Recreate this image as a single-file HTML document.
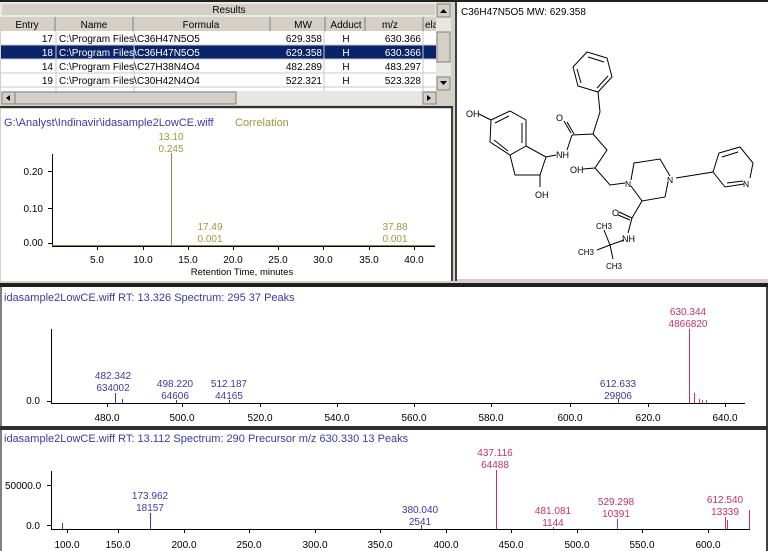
<!DOCTYPE html>
<html><head><meta charset="utf-8"><style>
html,body{margin:0;padding:0;background:#d4d0c8;width:768px;height:551px;overflow:hidden}
svg{display:block;font-family:"Liberation Sans",Arial,sans-serif}
</style></head><body>
<svg width="768" height="551" viewBox="0 0 768 551" xmlns="http://www.w3.org/2000/svg">
<rect x="0" y="0" width="768" height="2" fill="#202020"/>
<rect x="0" y="2" width="453" height="105" fill="#d4d0c8"/>
<rect x="1" y="3" width="435" height="13" fill="#d4d0c8" stroke="#ffffff" stroke-width="1"/>
<text x="229" y="13" font-size="10" text-anchor="middle" fill="#000">Results</text>
<g font-size="10" fill="#000">
<rect x="1" y="17" width="435" height="14" fill="#d4d0c8"/>
<g stroke="#808080"><line x1="55" y1="17" x2="55" y2="31"/><line x1="133" y1="17" x2="133" y2="31"/><line x1="270" y1="17" x2="270" y2="31"/><line x1="325" y1="17" x2="325" y2="31"/><line x1="365" y1="17" x2="365" y2="31"/><line x1="423" y1="17" x2="423" y2="31"/></g>
<text x="27" y="28" text-anchor="middle">Entry</text><text x="94" y="28" text-anchor="middle">Name</text><text x="201" y="28" text-anchor="middle">Formula</text><text x="303" y="28" text-anchor="middle">MW</text><text x="346" y="28" text-anchor="middle">Adduct</text><text x="390" y="28" text-anchor="middle">m/z</text><text x="425" y="28">ela</text>
<rect x="1" y="31" width="435" height="60" fill="#fff"/>
<rect x="1" y="45" width="435" height="14" fill="#0a246a"/>
<g stroke="#c8c8c8"><line x1="1" y1="45" x2="436" y2="45"/><line x1="1" y1="59" x2="436" y2="59"/><line x1="1" y1="73" x2="436" y2="73"/><line x1="1" y1="87" x2="436" y2="87"/>
<line x1="56" y1="31" x2="56" y2="91"/><line x1="134" y1="31" x2="134" y2="91"/><line x1="324" y1="31" x2="324" y2="91"/><line x1="423" y1="31" x2="423" y2="91"/></g>
<g><text x="53" y="42" text-anchor="end">17</text><text x="59" y="42">C:\Program Files\</text><text x="137" y="42">C36H47N5O5</text><text x="322" y="42" text-anchor="end">629.358</text><text x="346" y="42" text-anchor="middle">H</text><text x="421" y="42" text-anchor="end">630.366</text></g>
<g fill="#fff"><text x="53" y="56" text-anchor="end">18</text><text x="59" y="56">C:\Program Files\</text><text x="137" y="56">C36H47N5O5</text><text x="322" y="56" text-anchor="end">629.358</text><text x="346" y="56" text-anchor="middle">H</text><text x="421" y="56" text-anchor="end">630.366</text></g>
<g><text x="53" y="70" text-anchor="end">14</text><text x="59" y="70">C:\Program Files\</text><text x="137" y="70">C27H38N4O4</text><text x="322" y="70" text-anchor="end">482.289</text><text x="346" y="70" text-anchor="middle">H</text><text x="421" y="70" text-anchor="end">483.297</text></g>
<g><text x="53" y="84" text-anchor="end">19</text><text x="59" y="84">C:\Program Files\</text><text x="137" y="84">C30H42N4O4</text><text x="322" y="84" text-anchor="end">522.321</text><text x="346" y="84" text-anchor="middle">H</text><text x="421" y="84" text-anchor="end">523.328</text></g>
</g>
<rect x="436" y="3" width="15" height="88" fill="#e8e6e0"/>
<rect x="437" y="4" width="13" height="13" fill="#d4d0c8" stroke="#808080"/><path d="M440 13 L443.5 9 L447 13Z" fill="#000"/>
<rect x="437" y="32" width="13" height="30" fill="#d4d0c8" stroke="#808080"/>
<rect x="437" y="77" width="13" height="13" fill="#d4d0c8" stroke="#808080"/><path d="M440 81 L443.5 85 L447 81Z" fill="#000"/>
<rect x="1" y="91" width="435" height="14" fill="#e8e6e0"/>
<rect x="2" y="92" width="13" height="12" fill="#d4d0c8" stroke="#808080"/><path d="M10 95 L6 98 L10 101Z" fill="#000"/>
<rect x="15" y="92" width="221" height="12" fill="#d4d0c8" stroke="#808080"/>
<rect x="423" y="92" width="13" height="12" fill="#d4d0c8" stroke="#808080"/><path d="M427 95 L431 98 L427 101Z" fill="#000"/>
<rect x="0" y="106" width="453" height="2" fill="#303030"/>
<rect x="1" y="109" width="450" height="172" fill="#fff"/>
<rect x="451" y="108" width="2" height="174" fill="#404040"/>
<text x="4" y="126" font-size="11" fill="#3a3aa8">G:\Analyst\Indinavir\idasample2LowCE.wiff</text>
<text x="235" y="126" font-size="11" fill="#9a9a40">Correlation</text>
<g stroke="#000" stroke-width="1"><line x1="52.5" y1="154" x2="52.5" y2="246"/><line x1="52" y1="246.5" x2="435" y2="246.5"/>
<line x1="48" y1="171.5" x2="52" y2="171.5"/><line x1="48" y1="208.5" x2="52" y2="208.5"/><line x1="48" y1="243.5" x2="52" y2="243.5"/>
<line x1="97.5" y1="246" x2="97.5" y2="250"/><line x1="143.5" y1="246" x2="143.5" y2="250"/><line x1="188.5" y1="246" x2="188.5" y2="250"/><line x1="233.5" y1="246" x2="233.5" y2="250"/><line x1="278.5" y1="246" x2="278.5" y2="250"/><line x1="323.5" y1="246" x2="323.5" y2="250"/><line x1="369.5" y1="246" x2="369.5" y2="250"/><line x1="414.5" y1="246" x2="414.5" y2="250"/></g>
<line x1="52" y1="245.5" x2="435" y2="245.5" stroke="#8a8a40"/>
<line x1="171.5" y1="153" x2="171.5" y2="246" stroke="#8a8a40"/>
<g font-size="10" fill="#000"><text x="43" y="175" text-anchor="end">0.20</text><text x="43" y="212" text-anchor="end">0.10</text><text x="43" y="246" text-anchor="end">0.00</text>
<g text-anchor="middle"><text x="97" y="263">5.0</text><text x="143" y="263">10.0</text><text x="188" y="263">15.0</text><text x="233" y="263">20.0</text><text x="278" y="263">25.0</text><text x="323" y="263">30.0</text><text x="369" y="263">35.0</text><text x="414" y="263">40.0</text><text x="242" y="275" font-size="9.5">Retention Time, minutes</text></g></g>
<g font-size="10" fill="#9a9a40" text-anchor="middle"><text x="171" y="140">13.10</text><text x="171" y="152">0.245</text><text x="210" y="230">17.49</text><text x="210" y="242">0.001</text><text x="395" y="230">37.88</text><text x="395" y="242">0.001</text></g>
<rect x="455" y="2" width="2" height="279" fill="#404040"/>
<rect x="457" y="2" width="311" height="277" fill="#fff"/>
<text x="461" y="15" font-size="10" fill="#000">C36H47N5O5   MW: 629.358</text>
<g stroke="#000" stroke-width="1" fill="none">
<path d="M587 52 L607 58 L612 77 L598 92 L578 86 L573 67 Z M588 57 L604 62 M608 76 L597 88 M577 69 L581 83"/>
<path d="M598 92 L600 112 L593 134 L572 135 M593 134 L607 150 L595 168 L610 185 L625 183"/>
<path d="M571 133 L564 121 M574 134 L567 122 M572 135 L567 150"/>
<path d="M595 168 L583 169"/>
<path d="M631 180 L634 163 L660 159 L670 176 M668 182 L665 197 L642 201 L631 186"/>
<path d="M676 178 L713 172 L719 153 L740 147 L753 163 L750 178 M744 184 L725 187 L713 172 M722 157 L738 152 M727 183 L743 181"/>
<path d="M642 201 L632 218 L628 233 M632 218 L619 212 M630 220 L618 215 M624 240 L610 245 L604 230 M610 245 L597 250 M610 245 L613 259"/>
<path d="M491 120 L510 111 L526 120 L526 146 L510 155 L490 142 Z M495 123 L509 116 M522 123 L522 143 M508 151 L494 140"/>
<path d="M491 120 L479 114 M526 146 L546 157 L540 175 L515 175 L510 155 M546 157 L556 155 M540 175 L540 187"/>
</g>
<g font-size="9" fill="#000"><text x="466" y="117">OH</text><text x="556" y="121">O</text><text x="556" y="158">NH</text><text x="570" y="173">OH</text><text x="625" y="187" font-size="8.5">N</text><text x="667" y="183" font-size="8.5">N</text><text x="743" y="187" font-size="8.5">N</text><text x="535" y="198">OH</text><text x="612" y="216">O</text><text x="622" y="242">NH</text><text x="596" y="229" font-size="8">CH3</text><text x="578" y="255" font-size="8">CH3</text><text x="606" y="269" font-size="8">CH3</text></g>
<rect x="0" y="281" width="768" height="2" fill="#d4d0c8"/>
<rect x="0" y="283" width="768" height="4" fill="#202020"/>
<rect x="0" y="287" width="766" height="139" fill="#fff"/>
<rect x="766" y="287" width="2" height="139" fill="#404040"/>
<rect x="0" y="287" width="2" height="139" fill="#808080"/>
<text x="4" y="301" font-size="11" fill="#3a3aa8">idasample2LowCE.wiff RT: 13.326 Spectrum: 295  37 Peaks</text>
<g stroke="#000"><line x1="51.5" y1="329" x2="51.5" y2="403"/><line x1="51" y1="403.5" x2="745" y2="403.5"/><line x1="47" y1="401.5" x2="51" y2="401.5"/>
<g><line x1="107.5" y1="403" x2="107.5" y2="407"/><line x1="182.5" y1="403" x2="182.5" y2="407"/><line x1="260.5" y1="403" x2="260.5" y2="407"/><line x1="337.5" y1="403" x2="337.5" y2="407"/><line x1="414.5" y1="403" x2="414.5" y2="407"/><line x1="491.5" y1="403" x2="491.5" y2="407"/><line x1="570.5" y1="403" x2="570.5" y2="407"/><line x1="648.5" y1="403" x2="648.5" y2="407"/><line x1="725.5" y1="403" x2="725.5" y2="407"/></g></g>
<g stroke="#3a3aa8"><line x1="115.5" y1="393" x2="115.5" y2="403"/><line x1="122.5" y1="399" x2="122.5" y2="403"/><line x1="176.5" y1="400" x2="176.5" y2="403"/><line x1="229.5" y1="400" x2="229.5" y2="403"/><line x1="618.5" y1="399" x2="618.5" y2="403"/></g>
<g stroke="#c8306a"><line x1="689.5" y1="329" x2="689.5" y2="403"/><line x1="694.5" y1="393" x2="694.5" y2="403"/><line x1="699.5" y1="399" x2="699.5" y2="403"/><line x1="702.5" y1="400" x2="702.5" y2="403"/><line x1="706.5" y1="400" x2="706.5" y2="403"/></g>
<g font-size="10" fill="#000"><text x="40" y="404" text-anchor="end">0.0</text>
<g text-anchor="middle"><text x="107" y="421">480.0</text><text x="182" y="421">500.0</text><text x="260" y="421">520.0</text><text x="337" y="421">540.0</text><text x="414" y="421">560.0</text><text x="491" y="421">580.0</text><text x="570" y="421">600.0</text><text x="648" y="421">620.0</text><text x="725" y="421">640.0</text></g></g>
<g font-size="10" fill="#3a3aa8" text-anchor="middle"><text x="113" y="379">482.342</text><text x="113" y="391">634002</text><text x="175" y="387">498.220</text><text x="175" y="399">64606</text><text x="229" y="387">512.187</text><text x="229" y="399">44165</text><text x="618" y="387">612.633</text><text x="618" y="399">29806</text></g>
<g font-size="10" fill="#c8306a" text-anchor="middle"><text x="688" y="315">630.344</text><text x="688" y="327">4866820</text></g>
<rect x="0" y="426" width="768" height="4" fill="#303030"/>
<rect x="0" y="430" width="766" height="121" fill="#fff"/>
<rect x="766" y="430" width="2" height="121" fill="#404040"/>
<rect x="0" y="430" width="2" height="121" fill="#808080"/>
<text x="4" y="442" font-size="11" fill="#3a3aa8">idasample2LowCE.wiff RT: 13.112 Spectrum: 290 Precursor m/z 630.330  13 Peaks</text>
<g stroke="#000"><line x1="51.5" y1="471" x2="51.5" y2="529"/><line x1="51" y1="529.5" x2="750" y2="529.5"/><line x1="47" y1="485.5" x2="51" y2="485.5"/><line x1="47" y1="525.5" x2="51" y2="525.5"/>
<line x1="67.5" y1="529" x2="67.5" y2="533"/><line x1="118.5" y1="529" x2="118.5" y2="533"/><line x1="184.5" y1="529" x2="184.5" y2="533"/><line x1="249.5" y1="529" x2="249.5" y2="533"/><line x1="315.5" y1="529" x2="315.5" y2="533"/><line x1="380.5" y1="529" x2="380.5" y2="533"/><line x1="446.5" y1="529" x2="446.5" y2="533"/><line x1="511.5" y1="529" x2="511.5" y2="533"/><line x1="577.5" y1="529" x2="577.5" y2="533"/><line x1="642.5" y1="529" x2="642.5" y2="533"/><line x1="708.5" y1="529" x2="708.5" y2="533"/></g>
<g stroke="#3a3aa8"><line x1="62.5" y1="523" x2="62.5" y2="529"/><line x1="150.5" y1="513" x2="150.5" y2="529"/><line x1="421.5" y1="525" x2="421.5" y2="529"/></g>
<g stroke="#c8306a"><line x1="496.5" y1="470" x2="496.5" y2="529"/><line x1="553.5" y1="527" x2="553.5" y2="529"/><line x1="617.5" y1="519" x2="617.5" y2="529"/><line x1="725.5" y1="517" x2="725.5" y2="529"/><line x1="727.5" y1="520" x2="727.5" y2="529"/><line x1="749.5" y1="510" x2="749.5" y2="529"/></g>
<g font-size="10" fill="#000"><text x="5" y="489">50000.0</text><text x="40" y="529" text-anchor="end">0.0</text>
<g text-anchor="middle"><text x="67" y="548">100.0</text><text x="118" y="548">150.0</text><text x="184" y="548">200.0</text><text x="249" y="548">250.0</text><text x="315" y="548">300.0</text><text x="380" y="548">350.0</text><text x="446" y="548">400.0</text><text x="511" y="548">450.0</text><text x="577" y="548">500.0</text><text x="642" y="548">550.0</text><text x="708" y="548">600.0</text></g></g>
<g font-size="10" fill="#3a3aa8" text-anchor="middle"><text x="150" y="499">173.962</text><text x="150" y="511">18157</text><text x="420" y="513">380.040</text><text x="420" y="525">2541</text></g>
<g font-size="10" fill="#c8306a" text-anchor="middle"><text x="495" y="456">437.116</text><text x="495" y="468">64488</text><text x="553" y="514">481.081</text><text x="553" y="526">1144</text><text x="616" y="505">529.298</text><text x="616" y="517">10391</text><text x="725" y="503">612.540</text><text x="725" y="515">13339</text></g>
</svg>
</body></html>
